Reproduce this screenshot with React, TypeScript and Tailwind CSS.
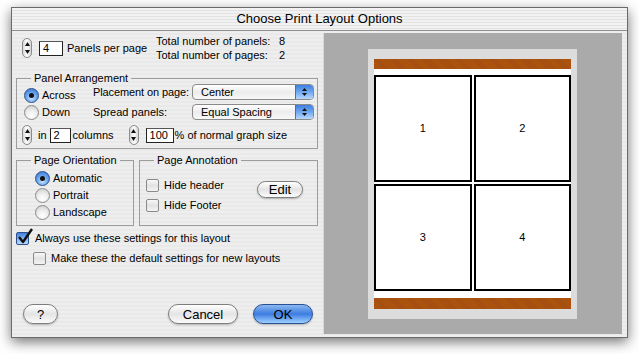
import React from 'react';

function Stepper() {
  return (
    <div className="w-[10px] h-[20px] rounded-full border border-[#8c8c8c] bg-gradient-to-r from-[#d8d8d8] via-[#ffffff] to-[#d4d4d4] flex flex-col items-center justify-between py-[3px] shrink-0">
      <svg width="5" height="4" viewBox="0 0 5 4"><path d="M2.5 0 L5 4 L0 4 Z" fill="#111" /></svg>
      <svg width="5" height="4" viewBox="0 0 5 4"><path d="M0 0 L5 0 L2.5 4 Z" fill="#111" /></svg>
    </div>
  );
}

function Field({ value, w }: { value: string; w: string }) {
  return (
    <div className={`${w} h-[15px] border border-[#222] border-t-[#555] bg-white flex items-center pl-[3px] text-[11px] leading-none shrink-0`}>
      {value}
    </div>
  );
}

function Radio({ on }: { on?: boolean }) {
  return on ? (
    <div className="w-[15px] h-[15px] rounded-full border border-[#2c4f8c] bg-[radial-gradient(circle_at_50%_70%,#cfe6ff_0%,#6ea8ee_45%,#2f6ad2_100%)] flex items-center justify-center shrink-0">
      <div className="w-[5px] h-[5px] rounded-full bg-[#111]" />
    </div>
  ) : (
    <div className="w-[15px] h-[15px] rounded-full border border-[#8a8a8a] bg-[radial-gradient(circle_at_50%_75%,#ffffff_0%,#eeeeee_45%,#c8c8c8_100%)] shrink-0" />
  );
}

function Check({ on }: { on?: boolean }) {
  return (
    <div className="relative w-[13px] h-[13px] shrink-0">
      {on ? (
        <div className="w-[13px] h-[13px] rounded-[2px] border border-[#2c4f8c] bg-gradient-to-b from-[#3f7fe0] via-[#7db2f2] to-[#b9dcff]" />
      ) : (
        <div className="w-[13px] h-[13px] rounded-[2px] border border-[#8a8a8a] bg-gradient-to-b from-[#f8f8f8] via-[#e2e2e2] to-[#f4f4f4]" />
      )}
      {on && (
        <svg className="absolute left-[1px] top-[-4px]" width="16" height="16" viewBox="0 0 16 16">
          <path d="M2 9 L6 14 L15 1" fill="none" stroke="#111" strokeWidth="2.4" strokeLinejoin="round" />
        </svg>
      )}
    </div>
  );
}

function Popup({ label }: { label: string }) {
  return (
    <div className="w-[122px] h-[16px] rounded-[4px] border border-[#8a8a8a] bg-gradient-to-b from-[#ffffff] via-[#ececec] to-[#f8f8f8] flex items-stretch overflow-hidden">
      <div className="flex-1 flex items-center pl-[8px] text-[11px] leading-none">{label}</div>
      <div className="w-[18px] bg-gradient-to-b from-[#3c7fe0] via-[#70a8ef] to-[#b6d8ff] border-l border-[#4b6fa8] flex flex-col items-center justify-center gap-[2px]">
        <svg width="5" height="3" viewBox="0 0 5 3"><path d="M2.5 0 L5 3 L0 3 Z" fill="#111" /></svg>
        <svg width="5" height="3" viewBox="0 0 5 3"><path d="M0 0 L5 0 L2.5 3 Z" fill="#111" /></svg>
      </div>
    </div>
  );
}

function PushButton({ label, w, primary, h = 'h-[20px]' }: { label: string; w: string; primary?: boolean; h?: string }) {
  const skin = primary
    ? 'border-[#2a4f95] bg-gradient-to-b from-[#8ab8f0] via-[#3d7ce0] to-[#9fd0ff]'
    : 'border-[#7d7d7d] bg-gradient-to-b from-[#ffffff] via-[#e4e4e4] to-[#fbfbfb]';
  return (
    <div className={`${w} ${h} rounded-full border ${skin} flex items-center justify-center text-[13px] leading-none text-black shadow-[0_1px_2px_rgba(0,0,0,0.25)]`}>
      {label}
    </div>
  );
}

function GroupBox({ title, className, children }: { title: string; className: string; children: React.ReactNode }) {
  return (
    <div className={`relative border border-[#9c9c9c] ${className}`}>
      <div className="absolute left-[14px] top-[-8px] px-[3px] bg-[#ececec] text-[11px] leading-[14px]">{title}</div>
      {children}
    </div>
  );
}

function Cell({ n }: { n: string }) {
  return (
    <div className="border-2 border-black bg-white flex items-center justify-center text-[11px]">{n}</div>
  );
}

const brown = 'bg-[#a9520e] bg-[repeating-linear-gradient(45deg,#b0560c_0px,#b0560c_1px,#a04c12_1px,#a04c12_2px)]';

export default function App() {
  return (
    <div className="w-[639px] h-[354px] bg-white pt-[7px] pl-[11px] font-['Liberation_Sans',Arial,sans-serif] text-black whitespace-nowrap select-none">
      <div className="w-[617px] h-[331px] flex flex-col border border-[#6b6b6b] bg-[#ececec] shadow-[0_4px_12px_rgba(0,0,0,0.55)]">
        {/* title bar */}
        <div className="h-[23px] shrink-0 flex items-center justify-center border-b border-[#8e8e8e] bg-[repeating-linear-gradient(180deg,#f2f2f2_0px,#f2f2f2_2px,#e2e2e2_2px,#e2e2e2_3px)] text-[13px]">
          Choose Print Layout Options
        </div>

        <div className="flex-1 flex bg-[repeating-linear-gradient(180deg,#eeeeee_0px,#eeeeee_2px,#e9e9e9_2px,#e9e9e9_4px)]">
          {/* left column */}
          <div className="w-[311px] shrink-0 flex flex-col">
            {/* panels per page */}
            <div className="h-[28px] mt-[3px] flex">
              <div className="w-[144px] pl-[10px] flex items-center text-[11px]">
                <Stepper />
                <div className="ml-[7px]"><Field value="4" w="w-[24px]" /></div>
                <span className="ml-[4px]">Panels per page</span>
              </div>
              <div className="flex flex-col text-[11px] leading-[14px]">
                <div className="flex"><span className="w-[123px]">Total number of panels:</span><span>8</span></div>
                <div className="flex"><span className="w-[123px]">Total number of pages:</span><span>2</span></div>
              </div>
            </div>

            {/* Panel Arrangement */}
            <GroupBox title="Panel Arrangement" className="ml-[4px] mt-[16px] w-[302px] h-[71px]">
              <div className="flex pt-[5px]">
                <div className="w-[76px] pl-[7px] pt-[4px] flex flex-col gap-[2px] text-[11px]">
                  <div className="h-[15px] flex items-center gap-[3px]"><Radio on /><span>Across</span></div>
                  <div className="h-[15px] flex items-center gap-[3px]"><Radio /><span>Down</span></div>
                </div>
                <div className="flex flex-col gap-[4px] text-[11px]">
                  <div className="h-[16px] flex items-center"><span className="w-[99px] tracking-[-0.1px]">Placement on page:</span><Popup label="Center" /></div>
                  <div className="h-[16px] flex items-center"><span className="w-[99px]">Spread panels:</span><Popup label="Equal Spacing" /></div>
                </div>
              </div>
              <div className="flex items-center pl-[5px] mt-[5px] text-[11px]">
                <Stepper />
                <span className="ml-[6px]">in</span>
                <div className="ml-[3px]"><Field value="2" w="w-[21px]" /></div>
                <span className="ml-[2px] w-[56px]">columns</span>
                <Stepper />
                <div className="ml-[7px]"><Field value="100" w="w-[28px]" /></div>
                <span className="ml-[1px]">% of normal graph size</span>
              </div>
            </GroupBox>

            <div className="flex ml-[4px] mt-[11px] gap-[5px]">
              <GroupBox title="Page Orientation" className="w-[118px] h-[66px]">
                <div className="pl-[18px] pt-[10px] flex flex-col gap-[2px] text-[11px]">
                  <div className="h-[15px] flex items-center gap-[3px]"><Radio on /><span>Automatic</span></div>
                  <div className="h-[15px] flex items-center gap-[3px]"><Radio /><span>Portrait</span></div>
                  <div className="h-[15px] flex items-center gap-[3px]"><Radio /><span>Landscape</span></div>
                </div>
              </GroupBox>
              <GroupBox title="Page Annotation" className="w-[179px] h-[66px]">
                <div className="flex pl-[6px] pt-[18px] text-[11px]">
                  <div className="w-[111px] flex flex-col gap-[7px]">
                    <div className="h-[13px] flex items-center gap-[5px]"><Check /><span>Hide header</span></div>
                    <div className="h-[13px] flex items-center gap-[5px]"><Check /><span>Hide Footer</span></div>
                  </div>
                  <div className="pt-[2px]"><PushButton label="Edit" w="w-[46px]" h="h-[17px]" /></div>
                </div>
              </GroupBox>
            </div>

            <div className="ml-[4px] mt-[6px] h-[13px] flex items-center gap-[6px] text-[11px]">
              <Check on /><span>Always use these settings for this layout</span>
            </div>
            <div className="ml-[21px] mt-[7px] h-[13px] flex items-center gap-[5px] text-[11px]">
              <Check /><span>Make these the default settings for new layouts</span>
            </div>

            <div className="mt-[39px] flex items-center">
              <div className="ml-[11px]"><PushButton label="?" w="w-[35px]" /></div>
              <div className="ml-[110px]"><PushButton label="Cancel" w="w-[70px]" /></div>
              <div className="ml-[15px]"><PushButton label="OK" w="w-[60px]" primary /></div>
            </div>
          </div>

          {/* preview */}
          <div className="flex-1 mt-[2px] mr-[5px] mb-[3px] bg-[#aaaaaa] border-l border-[#d8d8d8] pt-[16px] pl-[44px]">
            <div className="w-[209px] h-[270px] bg-[#dcdcdc] p-[6px] pt-[10px] pb-[10px]">
              <div className="h-full bg-white flex flex-col">
                <div className={`h-[10px] ${brown}`} />
                <div className="flex-1 grid grid-cols-2 grid-rows-2 gap-[2px] mt-[6px] mb-[7px]">
                  <Cell n="1" />
                  <Cell n="2" />
                  <Cell n="3" />
                  <Cell n="4" />
                </div>
                <div className={`h-[11px] ${brown}`} />
              </div>
            </div>
          </div>
        </div>
      </div>
    </div>
  );
}
